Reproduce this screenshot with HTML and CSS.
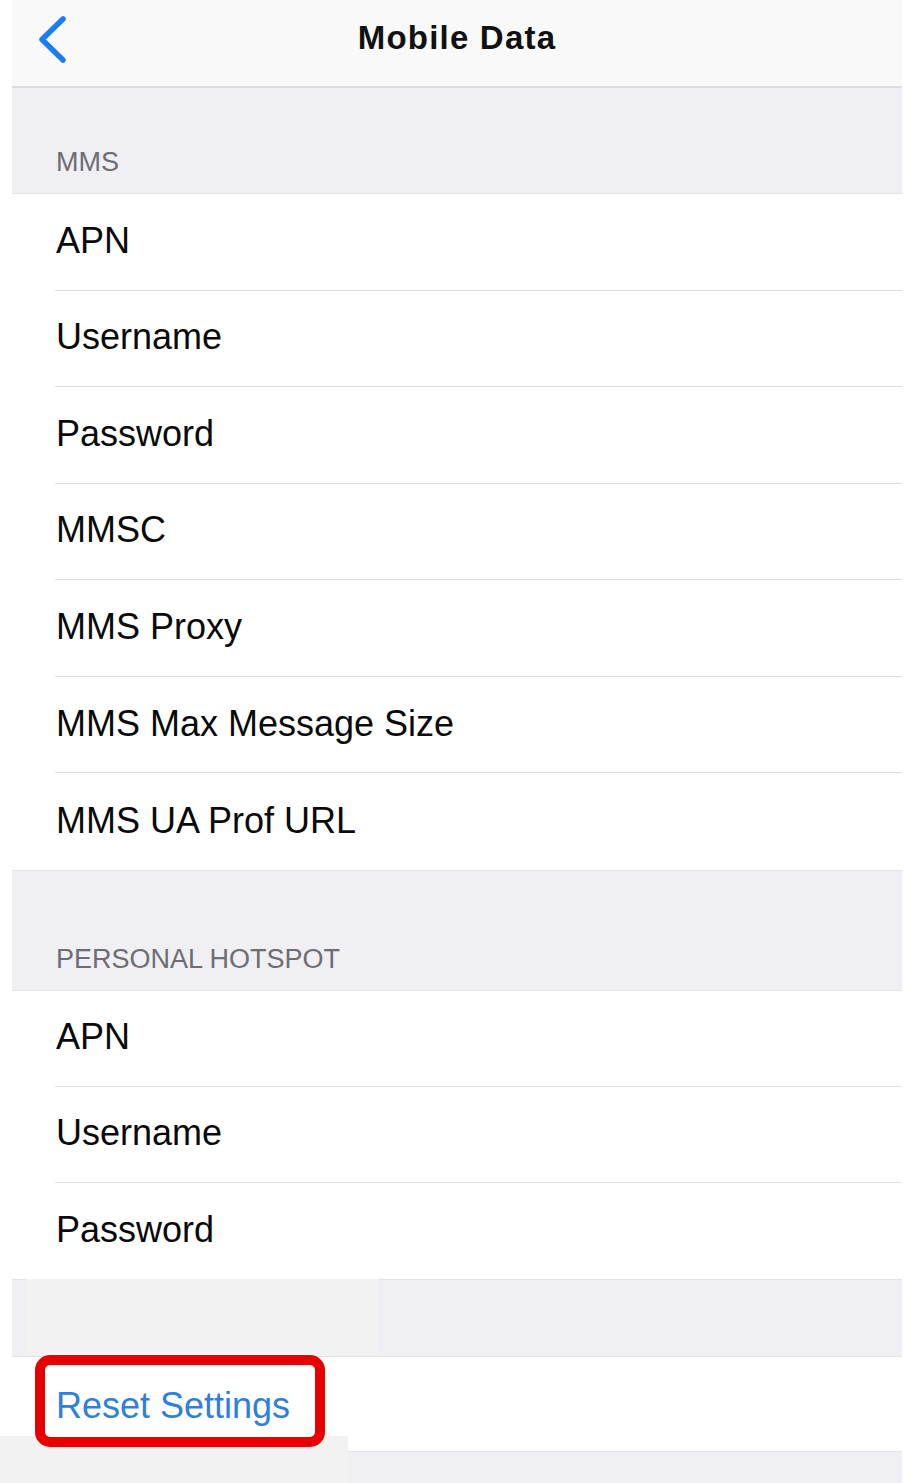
FILE: index.html
```html
<!DOCTYPE html>
<html>
<head>
<meta charset="utf-8">
<link rel="stylesheet" href="styles.css">
</head>
<body>
<div class="screen">
  <header class="nav">
    <div class="nav-left">
      <svg class="back" width="30" height="50" viewBox="0 0 30 50">
        <path d="M24 3 L3 23.5 L24 44" fill="none" stroke="#1b7cf4" stroke-width="5.5" stroke-linecap="round" stroke-linejoin="round"/>
      </svg>
    </div>
    <div class="nav-title">Mobile Data</div>
    <div class="nav-right"></div>
  </header>

  <div class="section-header first"><span>MMS</span></div>
  <div class="group">
    <div class="row"><div class="row-inner">APN</div></div>
    <div class="row"><div class="row-inner">Username</div></div>
    <div class="row"><div class="row-inner">Password</div></div>
    <div class="row"><div class="row-inner">MMSC</div></div>
    <div class="row"><div class="row-inner">MMS Proxy</div></div>
    <div class="row"><div class="row-inner">MMS Max Message Size</div></div>
    <div class="row"><div class="row-inner">MMS UA Prof URL</div></div>
  </div>

  <div class="section-header second"><span>PERSONAL HOTSPOT</span></div>
  <div class="group">
    <div class="row short"><div class="row-inner">APN</div></div>
    <div class="row short"><div class="row-inner">Username</div></div>
    <div class="row short"><div class="row-inner">Password</div></div>
  </div>

  <div class="spacer"></div>
  <div class="group">
    <div class="row reset"><div class="row-inner action">Reset Settings</div><div class="highlight"></div></div>
  </div>
  <div class="bottom-fill"></div>
</div>
<div class="patch patch-a"></div>
<div class="patch patch-b"></div>
<div class="ring"></div>
</body>
</html>
```

FILE: styles.css
```css
* { box-sizing: border-box; }
html, body {
  margin: 0;
  padding: 0;
  background: #ffffff;
}
body {
  position: relative;
  height: 1483px;
  overflow: hidden;
  font-family: "Liberation Sans", Arial, sans-serif;
}
.screen {
  width: 890px;
  margin-left: 12px;
  background: #efeff4;
  height: 1483px;
}
.nav {
  height: 88px;
  background: #f9f9f9;
  border-bottom: 2px solid #dcdce1;
  display: grid;
  grid-template-columns: 1fr auto 1fr;
  align-items: center;
}
.nav-left {
  display: flex;
  align-items: center;
  padding-left: 27px;
  padding-bottom: 4px;
}
.back { display: block; }
.nav-title {
  font-size: 33px;
  font-weight: bold;
  letter-spacing: 1.2px;
  line-height: 1;
  color: #111111;
  padding-bottom: 11px;
}
.section-header {
  display: flex;
  align-items: flex-end;
  padding-left: 44px;
  padding-bottom: 15px;
  color: #6d6d72;
  font-size: 27px;
  line-height: 32px;
}
.section-header.first { height: 105px; }
.section-header.second { height: 119px; }
.group {
  background: #ffffff;
  border-top: 1px solid #e2e2e7;
  border-bottom: 1px solid #e2e2e7;
}
.row {
  height: 96.57px;
  padding-left: 43px;
  position: relative;
}
.row.short { height: 96px; }
.row-inner {
  height: 100%;
  display: flex;
  align-items: center;
  padding-left: 1px;
  padding-bottom: 2px;
  font-size: 36px;
  color: #0a0a0a;
  border-bottom: 1px solid #dedee2;
}
.row:last-child .row-inner { border-bottom: none; }
.spacer { height: 76px; }
.row.reset { height: 94px; }
.row-inner.action {
  color: #2f80d9;
  padding-top: 6px;
}
.bottom-fill { height: 40px; }
.patch {
  position: absolute;
  background: #f2f2f2;
}
.patch-a {
  left: 26px;
  top: 1279px;
  width: 352px;
  height: 77px;
}
.patch-b {
  left: 0;
  top: 1436px;
  width: 348px;
  height: 47px;
}
.ring {
  position: absolute;
  left: 35px;
  top: 1355px;
  width: 290px;
  height: 92px;
  border: 10px solid #e60000;
  border-radius: 15px;
}
```
